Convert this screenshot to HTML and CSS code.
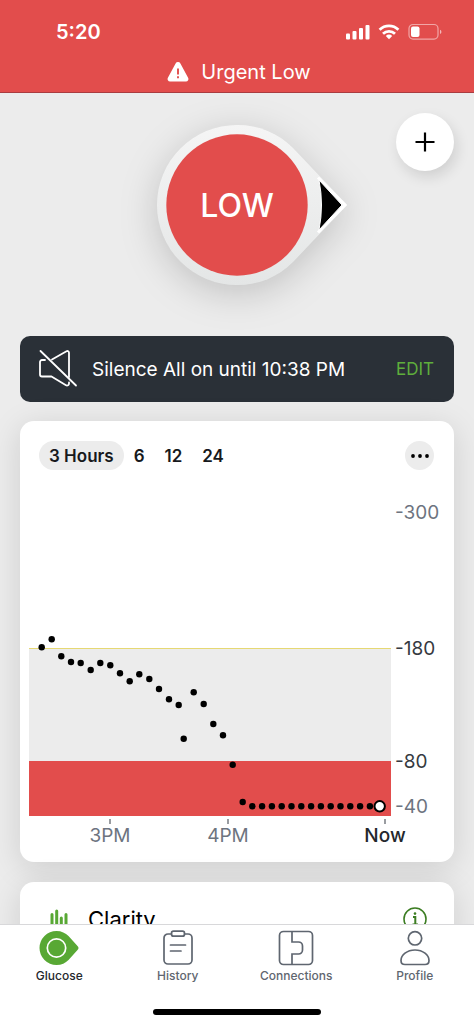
FILE: index.html
```html
<!DOCTYPE html>
<html lang="en">
<head>
<meta charset="utf-8">
<meta name="viewport" content="width=device-width, initial-scale=1">
<title>Glucose</title>
<link rel="stylesheet" href="styles.css">
</head>
<body>
<div class="app">
  <header class="header">
    <div class="status">
      <span class="time">5:20</span>
      <svg class="status-icons" viewBox="0 0 96 18" width="96" height="18" aria-hidden="true">
        <g fill="#fff">
          <rect x="0" y="10.500" width="4" height="6" rx="1"/>
          <rect x="6.500" y="8" width="4" height="8.500" rx="1"/>
          <rect x="13" y="5" width="4" height="11.500" rx="1"/>
          <rect x="19.500" y="2" width="4" height="14.500" rx="1"/>
          <path d="M43 16.200l-3.200-3.300a4.600 4.600 0 0 1 6.400 0z"/>
        </g>
        <g fill="none" stroke="#fff" stroke-width="2.800">
          <path d="M33.600 6.800a13.400 13.400 0 0 1 18.800 0"/>
          <path d="M37 10.700a8.700 8.700 0 0 1 12 0"/>
        </g>
        <rect x="63" y="1.500" width="29" height="14.600" rx="4" fill="none" stroke="#fff" stroke-opacity=".5" stroke-width="1.200"/>
        <rect x="65" y="3.500" width="8.500" height="10.600" rx="2" fill="#fff"/>
        <path d="M94 6.700v4.400a2.400 2.400 0 0 0 0-4.400z" fill="#fff" fill-opacity=".6"/>
      </svg>
    </div>
    <div class="alert" role="alert">
      <svg viewBox="0 0 22 20" width="22" height="20" aria-hidden="true">
        <path d="M8.600 1.500a2.700 2.700 0 0 1 4.800 0l7.700 14.200a2.500 2.500 0 0 1-2.200 3.800H3.100a2.500 2.500 0 0 1-2.200-3.800z" fill="#fff"/>
        <path d="M11 6.500v6M11 14.300v1.900" stroke="#e24d4c" stroke-width="1.900"/>
      </svg>
      <span>Urgent Low</span>
    </div>
  </header>

  <main class="content">
    <section class="hero">
      <div class="gauge">
        <svg class="gauge-shape" viewBox="0 0 200 168" width="200" height="168" aria-hidden="true">
          <defs>
            <linearGradient id="ring" x1="0" y1="0" x2="0" y2="1">
              <stop offset="0" stop-color="#f5f5f5"/>
              <stop offset="1" stop-color="#e4e6e6"/>
            </linearGradient>
          </defs>
          <path d="M84 4a80 80 0 1 0 0 160c22 0 41-8 56-23L194 84 140 27C125 12 106 4 84 4z" fill="url(#ring)"/>
          <path d="M165 56.500l27 27.500-27 27.500" fill="none" stroke="#fff" stroke-width="3"/>
          <circle cx="84" cy="84" r="70.700" fill="#e24d4c"/>
          <path d="M166 59l23 25-23 25q5-25 0-50z" fill="#000" stroke="#fff" stroke-width="1"/>
        </svg>
        <strong class="reading">LOW</strong>
      </div>
      <button class="add" aria-label="Add event">
        <svg viewBox="0 0 20 20" width="20" height="20" aria-hidden="true"><path d="M10 0.500v19M0.500 10h19" stroke="#000" stroke-width="2.200"/></svg>
      </button>
    </section>

    <section class="silence">
      <svg viewBox="0 0 40 40" width="40" height="40" fill="none" stroke="#fff" stroke-width="1.800" stroke-linecap="round" stroke-linejoin="round" aria-hidden="true">
        <path d="M7 11H4a2 2 0 0 0-2 2v12.500a2 2 0 0 0 2 2h9.500L28 36.300a2 2 0 0 0 3-1.800v-1"/>
        <path d="M14 10.500L28.500 2.200A1.700 1.700 0 0 1 31 3.700V28"/>
        <path d="M2.500 2L38 36.500"/>
      </svg>
      <span class="silence-text">Silence All on until 10:38 PM</span>
      <button class="edit">EDIT</button>
    </section>

    <section class="card chart-card">
      <div class="toolbar">
        <div class="ranges">
          <button class="range selected" aria-pressed="true">3 Hours</button>
          <button class="range" aria-pressed="false">6</button>
          <button class="range" aria-pressed="false">12</button>
          <button class="range" aria-pressed="false">24</button>
        </div>
        <button class="more" aria-label="More options">
          <svg viewBox="0 0 20 4" width="20" height="4" aria-hidden="true"><circle cx="3" cy="2" r="1.900"/><circle cx="10" cy="2" r="1.900"/><circle cx="17" cy="2" r="1.900"/></svg>
        </button>
      </div>
      <svg class="chart" viewBox="0 0 434 372" role="img" aria-label="Glucose over the last 3 hours">
        <rect x="9" y="158" width="362" height="113" fill="#ececec"/>
        <rect x="9" y="271" width="362" height="55" fill="#e24d4c"/>
        <rect x="9" y="158" width="362" height="1" fill="#e6d873"/>
        <path d="M90 329v5M208 329v5M365 329v5" stroke="#565b63" stroke-width="1.200"/>
        <g class="axis-y">
          <text class="muted" x="375" y="29">-300</text>
          <text x="375" y="165">-180</text>
          <text x="375" y="278">-80</text>
          <text class="muted" x="375" y="323">-40</text>
        </g>
        <g class="axis-x">
          <text class="muted" x="90" y="352">3PM</text>
          <text class="muted" x="208" y="352">4PM</text>
          <text class="now" x="365" y="352">Now</text>
        </g>
        <g fill="#000">
          <circle cx="21.700" cy="157.300" r="3.200"/><circle cx="31.700" cy="149.300" r="3.200"/>
          <circle cx="41.300" cy="166.300" r="3.200"/><circle cx="51" cy="172" r="3.200"/>
          <circle cx="60.700" cy="173" r="3.200"/><circle cx="70.700" cy="180" r="3.200"/>
          <circle cx="80.300" cy="173" r="3.200"/><circle cx="90.300" cy="175.300" r="3.200"/>
          <circle cx="100" cy="183.300" r="3.200"/><circle cx="109.700" cy="191.300" r="3.200"/>
          <circle cx="119.300" cy="184.300" r="3.200"/><circle cx="129.300" cy="189" r="3.200"/>
          <circle cx="139" cy="199" r="3.200"/><circle cx="149" cy="209.300" r="3.200"/>
          <circle cx="158.700" cy="215" r="3.200"/><circle cx="163.700" cy="248.700" r="3.200"/>
          <circle cx="173.700" cy="202.300" r="3.200"/><circle cx="183.700" cy="214" r="3.200"/>
          <circle cx="193.300" cy="234" r="3.200"/><circle cx="203" cy="245.300" r="3.200"/>
          <circle cx="212.700" cy="274.700" r="3.200"/><circle cx="222.700" cy="312" r="3.200"/>
          <circle cx="232.300" cy="316.300" r="3.200"/><circle cx="242.100" cy="316.300" r="3.200"/>
          <circle cx="251.900" cy="316.300" r="3.200"/><circle cx="261.700" cy="316.300" r="3.200"/>
          <circle cx="271.500" cy="316.300" r="3.200"/><circle cx="281.300" cy="316.300" r="3.200"/>
          <circle cx="291.100" cy="316.300" r="3.200"/><circle cx="300.900" cy="316.300" r="3.200"/>
          <circle cx="310.700" cy="316.300" r="3.200"/><circle cx="320.500" cy="316.300" r="3.200"/>
          <circle cx="330.300" cy="316.300" r="3.200"/><circle cx="340.100" cy="316.300" r="3.200"/>
          <circle cx="349.900" cy="316.300" r="3.200"/>
        </g>
        <circle cx="359.700" cy="316.300" r="5.200" fill="#fff" stroke="#000" stroke-width="2"/>
      </svg>
    </section>

    <section class="card clarity">
      <svg viewBox="0 0 18 20" width="18" height="20" stroke="#58a834" stroke-width="3" stroke-linecap="round" aria-hidden="true"><path d="M2 5.500V15M6.700 2V18M11.300 9V15M16 5.500V17"/></svg>
      <h2 class="clarity-title">Clarity</h2>
      <button class="info" aria-label="About Clarity">
        <svg viewBox="0 0 24 24" width="24" height="24" fill="none" stroke="#3c7d22" aria-hidden="true"><circle cx="12" cy="12" r="11" stroke-width="1.600"/><path d="M10 10h2.300v7.500M9.500 17.500h5.500" stroke-width="2"/><circle cx="12" cy="6.600" r="1.300" fill="#3c7d22" stroke="none"/></svg>
      </button>
    </section>
  </main>

  <footer class="footer">
    <nav class="tabs">
      <a class="tab active" href="#glucose" aria-current="page">
        <svg viewBox="0 0 40 36" width="40" height="36" aria-hidden="true"><path d="M17.500 1a17 17 0 1 0 0 34c5 0 9-2 12-5l9-10q2-2 0-4l-9-10c-3-3-7-5-12-5z" fill="#58a834"/><circle cx="17.500" cy="18" r="9.200" fill="none" stroke="#fff" stroke-width="1.700"/></svg>
        <span>Glucose</span>
      </a>
      <a class="tab" href="#history">
        <svg viewBox="0 0 36 36" width="36" height="36" fill="none" stroke="#5f6670" stroke-width="1.700" stroke-linecap="round" aria-hidden="true"><path d="M11.500 4H8a4 4 0 0 0-4 4v22a4 4 0 0 0 4 4h20a4 4 0 0 0 4-4V8a4 4 0 0 0-4-4h-3.500"/><rect x="11.500" y="1.200" width="13" height="5" rx="2"/><path d="M10.500 15h15M10.500 21h10.500"/></svg>
        <span>History</span>
      </a>
      <a class="tab" href="#connections">
        <svg viewBox="0 0 36 36" width="36" height="36" fill="none" stroke="#5f6670" stroke-width="1.700" aria-hidden="true"><rect x="1.500" y="1.500" width="33" height="33" rx="4"/><path d="M14 1.500V12h6.500a4 4 0 0 1 4 4v4a4 4 0 0 1-4 4H14v10.500"/></svg>
        <span>Connections</span>
      </a>
      <a class="tab" href="#profile">
        <svg viewBox="0 0 36 36" width="36" height="36" fill="none" stroke="#5f6670" stroke-width="1.700" aria-hidden="true"><circle cx="18" cy="8.300" r="6.700"/><path d="M4 30.500C4 25 10 20 18 20s14 5 14 10.500q0 4-4 4H8q-4 0-4-4z"/></svg>
        <span>Profile</span>
      </a>
    </nav>
    <div class="home-bar"></div>
  </footer>
</div>
</body>
</html>
```
FILE: styles.css
```css
* {
  box-sizing: border-box;
}

body {
  margin: 0;
  font-family: Inter, "Liberation Sans", sans-serif;
  color: #17191c;
}

button {
  border: 0;
  padding: 0;
  background: none;
  font: inherit;
  color: inherit;
  cursor: pointer;
}

svg {
  display: block;
  flex: none;
}

.app {
  display: flex;
  flex-direction: column;
  height: 100vh;
  background: #ececec;
}

.header {
  flex: none;
  padding: 20px 32px 8px 56px;
  background: #e24d4c;
  border-bottom: 1px solid #a93c40;
  color: #fff;
}

.status {
  display: flex;
  align-items: center;
  justify-content: space-between;
  height: 24px;
}

.time {
  font-size: 20px;
  font-weight: 600;
}

.alert {
  display: flex;
  align-items: center;
  justify-content: center;
  gap: 12px;
  height: 24px;
  margin: 16px 0 0 -20px;
  font-size: 20px;
}

.content {
  flex: 1;
  min-height: 0;
  overflow: hidden;
  padding: 0 20px;
}

.hero {
  display: grid;
  grid-template-columns: 1fr auto 1fr;
  padding: 20px 0 47px;
}

.gauge {
  display: grid;
  grid-column: 2;
  place-items: center start;
  margin: 8px 0 0 32px;
}

.gauge-shape,
.reading {
  grid-area: 1 / 1;
}

.gauge-shape {
  filter: drop-shadow(0 8px 18px rgba(0, 0, 0, 0.18));
}

.reading {
  width: 168px;
  text-align: center;
  font-size: 32px;
  font-weight: 500;
  color: #fff;
  z-index: 1;
}

.add {
  display: grid;
  place-items: center;
  justify-self: end;
  width: 58px;
  height: 58px;
  border-radius: 50%;
  background: #fff;
  box-shadow: 3px 6px 14px rgba(0, 0, 0, 0.12);
}

.silence {
  display: flex;
  align-items: center;
  gap: 14px;
  height: 66px;
  margin-bottom: 19px;
  padding: 0 20px 0 18px;
  border-radius: 10px;
  background: #2a3037;
  color: #fff;
  font-size: 19px;
}

.silence-text {
  flex: 1;
}

.edit {
  font-size: 17px;
  color: #5fae3c;
}

.card {
  border-radius: 14px;
  background: #fff;
  box-shadow: 0 6px 32px rgba(0, 0, 0, 0.13);
}

.chart-card {
  margin-bottom: 20px;
}

.toolbar {
  display: flex;
  align-items: center;
  justify-content: space-between;
  padding: 20px 20px 20px 19px;
}

.ranges {
  display: flex;
}

.range {
  height: 29px;
  padding: 0 10px;
  border-radius: 15px;
  font-size: 17px;
  font-weight: 600;
}

.selected,
.more {
  background: #ececec;
}

.more {
  display: grid;
  place-items: center;
  width: 29px;
  height: 29px;
  border-radius: 50%;
}

.chart {
  width: 100%;
}

.chart text {
  font-size: 19px;
  fill: #363a41;
}

.axis-x text {
  text-anchor: middle;
}

.chart .muted {
  fill: #6d747f;
}

.chart .now {
  font-weight: 500;
  fill: #24272c;
}

.clarity {
  display: flex;
  align-items: center;
  gap: 20px;
  height: 74px;
  padding: 0 27px 0 30px;
}

.clarity-title {
  flex: 1;
  margin: 0;
  font-size: 22px;
  font-weight: 400;
  color: #000;
}

.footer {
  position: relative;
  flex: none;
  padding: 5px 0 10px;
  background: #fff;
  border-top: 1px solid #d8d8da;
}

.tabs {
  display: grid;
  grid-template-columns: repeat(4, 1fr);
}

.tab {
  display: flex;
  flex-direction: column;
  align-items: center;
  gap: 2px;
  font-size: 12px;
  line-height: 16px;
  font-weight: 500;
  color: #5f6670;
  text-decoration: none;
}

.active {
  color: #24272c;
}

.home-bar {
  width: 168px;
  height: 6px;
  margin: 25px auto 0;
  border-radius: 3px;
  background: #000;
}
```
